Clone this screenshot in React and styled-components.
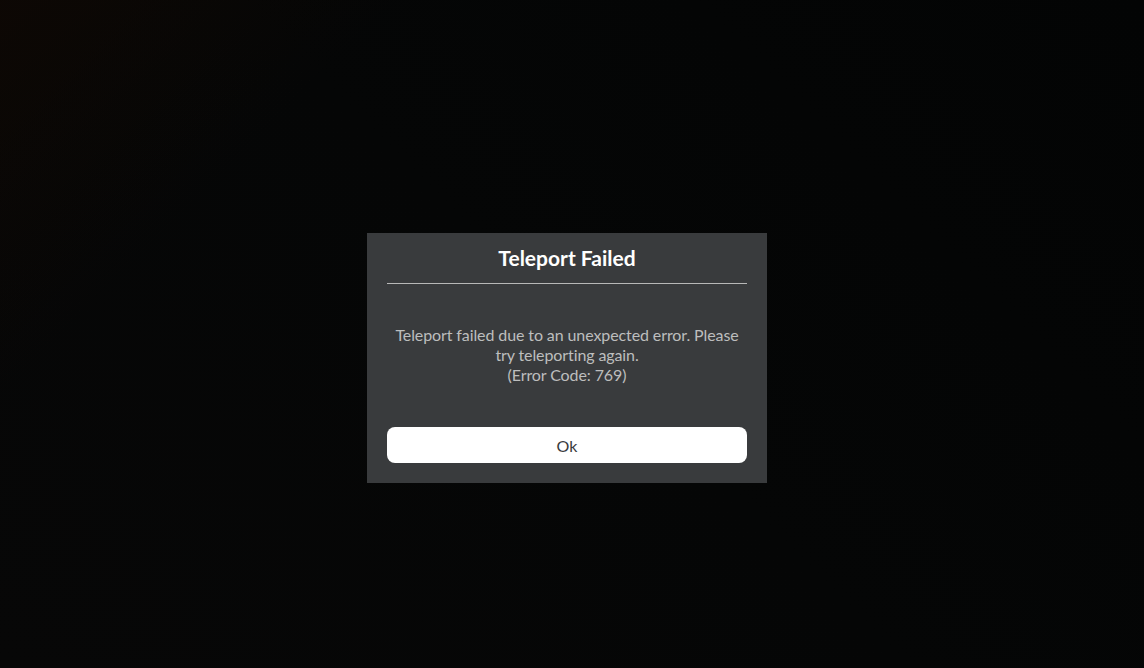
import React from 'react';
import styled, { createGlobalStyle } from 'styled-components';

const GlobalStyle = createGlobalStyle`
  html, body {
    margin: 0;
    padding: 0;
    height: 100%;
    background: #060606;
  }
  #root {
    height: 100%;
  }
`;

// game viewport sits under the hidden 48px top bar, so the modal centres lower
const Screen = styled.div`
  width: 100%;
  height: 100vh;
  box-sizing: border-box;
  padding: 48px 10px 0 0;
  display: flex;
  align-items: center;
  justify-content: center;
  background:
    linear-gradient(135deg, rgba(16, 8, 3, 0.7) 0%, rgba(0, 0, 0, 0) 22%),
    linear-gradient(45deg, #070707 0%, #050606 50%, #030404 100%);
  font-family: 'Source Sans Pro', Lato, 'Noto Sans', sans-serif;
`;

const Dialog = styled.div`
  width: 400px;
  box-sizing: border-box;
  padding: 0 20px 20px;
  background: #393b3d;
  display: flex;
  flex-direction: column;
`;

const Title = styled.h1`
  margin: 0;
  height: 50px;
  line-height: 50px;
  border-bottom: 1px solid #b8b8b8;
  text-align: center;
  font-size: 21px;
  font-weight: 700;
  color: #ffffff;
`;

const Message = styled.p`
  margin: 41px 0 42px;
  text-align: center;
  font-size: 16px;
  letter-spacing: -0.1px;
  line-height: 20px;
  color: #bdbebe;
`;

const Button = styled.button`
  height: 36px;
  border: none;
  border-radius: 8px;
  background: #ffffff;
  color: #393b3d;
  font-family: inherit;
  font-size: 16px;
  cursor: pointer;
`;

export default function App() {
  return (
    <>
      <GlobalStyle />
      <Screen>
        <Dialog>
          <Title>Teleport Failed</Title>
          <Message>
            Teleport failed due to an unexpected error. Please try teleporting again.
            <br />
            (Error Code: 769)
          </Message>
          <Button>Ok</Button>
        </Dialog>
      </Screen>
    </>
  );
}
